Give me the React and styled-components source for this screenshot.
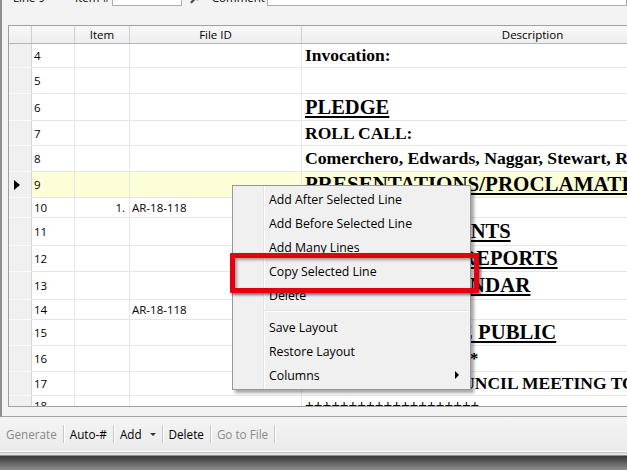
import React from 'react';
import styled, { createGlobalStyle } from 'styled-components';

const ui = `"Segoe UI", "Open Sans", "Noto Sans", sans-serif`;
const serif = `"Liberation Serif", "Times New Roman", serif`;

const Global = createGlobalStyle`
  html, body { margin: 0; padding: 0; background: #f0f0f0; }
  body { width: 627px; height: 470px; overflow: hidden; }
  #root { width: 627px; height: 470px; }
`;

const COLS = '23px 43px 55px 172px 462px';

const Screen = styled.div`
  position: relative;
  width: 627px;
  height: 470px;
  overflow: hidden;
  display: flex;
  flex-direction: column;
  background: #f0f0f0;
  font-family: ${ui};
  font-size: 11.5px;
  color: #000;
`;

const Panel = styled.div`
  flex: none;
  height: 417px;
  box-sizing: border-box;
  border-left: 2px solid #8f8f8f;
  border-bottom: 1px solid #a3a3a3;
  background: #f3f3f3;
  overflow: hidden;
  display: flex;
  flex-direction: column;
`;

const TopBar = styled.div`
  flex: none;
  height: 22px;
  margin-top: -14px;
  display: flex;
  align-items: center;
  padding-left: 11px;
  white-space: nowrap;
`;

const Label = styled.span`
  margin-left: ${p => p.$ml || 0}px;
  margin-right: ${p => p.$mr || 0}px;
`;

const Field = styled.div`
  height: 20px;
  box-sizing: border-box;
  border: 1px solid #abadb3;
  background: #fff;
  width: ${p => (p.$w ? `${p.$w}px` : 'auto')};
  flex: ${p => (p.$grow ? 1 : 'none')};
  margin-left: ${p => p.$ml || 0}px;
  margin-top: -2px;
`;

const IconWrap = styled.span`
  display: inline-flex;
  margin-left: ${p => p.$ml || 0}px;
`;

const GridBox = styled.div`
  flex: none;
  width: 756px;
  height: 382px;
  margin: 17px 0 0 6px;
  box-sizing: border-box;
  border: 1px solid #a0a0a0;
  border-right: none;
  background: #fff;
  overflow: hidden;
`;

const HeaderRow = styled.div`
  display: grid;
  grid-template-columns: ${COLS};
  height: 18px;
  box-sizing: border-box;
  border-bottom: 1px solid #b4b4b4;
  background: linear-gradient(#f8f8f8, #eeeeee);
`;

const HeaderCell = styled.div`
  box-sizing: border-box;
  border-right: 1px solid #d0d0d0;
  display: flex;
  align-items: center;
  justify-content: center;
  line-height: 1;
`;

const Row = styled.div`
  display: grid;
  grid-template-columns: ${COLS};
  height: ${p => p.$h}px;
`;

const RowHead = styled.div`
  box-sizing: border-box;
  background: #f0f0f0;
  border-right: 1px solid #d4d4d4;
  border-bottom: 1px solid #fafafa;
  display: flex;
  align-items: center;
  padding-left: 5px;
`;

const Cell = styled.div`
  box-sizing: border-box;
  background: ${p => (p.$sel ? '#fdfdd8' : '#fff')};
  border-right: 1px solid #e6e6e6;
  border-bottom: 1px solid #e6e6e6;
  display: flex;
  align-items: center;
  justify-content: ${p => (p.$right ? 'flex-end' : 'flex-start')};
  padding: ${p => (p.$right ? '0 4px 0 0' : '0 0 0 2px')};
  white-space: nowrap;
  overflow: hidden;
`;

const DescCell = styled(Cell)`
  padding-left: 3px;
  font-family: ${serif};
  font-weight: bold;
  font-size: ${p => p.$size || 17.5}px;
  text-decoration: ${p => (p.$u ? 'underline' : 'none')};
  text-decoration-thickness: 2px;
  text-underline-offset: 2px;
  overflow: visible;
`;

const Pointer = styled.span`
  width: 0;
  height: 0;
  border-left: 6px solid #000;
  border-top: 5px solid transparent;
  border-bottom: 5px solid transparent;
`;

const Footer = styled.div`
  flex: none;
  height: 35px;
  box-sizing: border-box;
  display: flex;
  align-items: center;
  padding-left: 0;
  font-size: 11.7px;
  background: linear-gradient(#f4f4f4, #ebebeb);
  border-bottom: 1px solid #fbfbfb;
`;

const ToolButton = styled.span`
  display: flex;
  align-items: center;
  height: 18px;
  padding: 0 6px;
  border-right: 1px solid #c8c8c8;
  box-shadow: 1px 0 0 #fff;
  color: ${p => (p.$disabled ? '#8a8a8a' : '#000')};
  white-space: nowrap;
`;

const Caret = styled.span`
  margin-left: 8px;
  width: 0;
  height: 0;
  border-top: 3px solid #333;
  border-left: 3px solid transparent;
  border-right: 3px solid transparent;
`;

const WindowEdge = styled.div`
  flex: 1;
  border-top: 1px solid #c2c2c2;
  background: linear-gradient(#e2e2e2 0, #e2e2e2 2px, #3a3a3a 3px, #4e4e4e 40%, #8e8e8e);
`;

const Menu = styled.div`
  position: absolute;
  left: 232px;
  top: 185px;
  width: 239px;
  box-sizing: border-box;
  padding: 1px 2px 2px;
  font-size: 12.3px;
  background-color: #f0f0f0;
  background-image: linear-gradient(
    to right,
    transparent 30px,
    #e2e3e3 30px,
    #e2e3e3 31px,
    #ffffff 31px,
    #ffffff 32px,
    transparent 32px
  );
  border: 1px solid #979797;
  box-shadow: 3px 3px 3px rgba(0, 0, 0, 0.35);
`;

const MenuItem = styled.div`
  height: 24px;
  display: flex;
  align-items: center;
  padding-left: 34px;
  padding-right: 9px;
  white-space: nowrap;
`;

const SubArrow = styled.span`
  margin-left: auto;
  width: 0;
  height: 0;
  border-left: 4px solid #000;
  border-top: 4px solid transparent;
  border-bottom: 4px solid transparent;
`;

const MenuSep = styled.div`
  height: 8px;
  display: flex;
  align-items: center;
  margin-left: 29px;
  &::after {
    content: '';
    flex: 1;
    height: 1px;
    border-top: 1px solid #e0e0e0;
    background: #fff;
  }
`;

const Highlight = styled.div`
  position: absolute;
  left: 230px;
  top: 253px;
  width: 249px;
  height: 40px;
  box-sizing: border-box;
  border: 5px solid #e4000f;
  border-radius: 1px;
  box-shadow: 2px 2px 3px rgba(0, 0, 0, 0.55), inset 2px 2px 3px rgba(0, 0, 0, 0.35);
`;

const SearchIcon = () => (
  <svg width="13" height="13" viewBox="0 0 13 13">
    <circle cx="7.5" cy="5" r="3.6" fill="#d8e6f5" stroke="#4a6d99" strokeWidth="1.4" />
    <path d="M5 7.6 L1.5 11.2" stroke="#3d4f68" strokeWidth="2.2" strokeLinecap="round" />
  </svg>
);

const rows = [
  { n: 4, h: 24, d: 'Invocation:' },
  { n: 5, h: 26 },
  { n: 6, h: 27, d: 'PLEDGE', size: 20.5, u: true },
  { n: 7, h: 25, d: 'ROLL CALL:' },
  { n: 8, h: 26, d: 'Comerchero, Edwards, Naggar, Stewart, Rahn', size: 17.7 },
  { n: 9, h: 26, d: 'PRESENTATIONS/PROCLAMATIONS', size: 21, u: true, sel: true },
  { n: 10, h: 20, item: '1.', file: 'AR-18-118' },
  { n: 11, h: 28, d: 'PUBLIC COMMENTS', size: 20.5, u: true },
  { n: 12, h: 26, d: 'CITY COUNCIL REPORTS', size: 20.5, u: true },
  { n: 13, h: 28, d: 'CONSENT CALENDAR', size: 21, u: true },
  { n: 14, h: 20, file: 'AR-18-118' },
  { n: 15, h: 26, d: 'REPORT TO THE PUBLIC', size: 20.7, u: true },
  { n: 16, h: 26, d: '*********************', size: 16.5 },
  { n: 17, h: 24, d: 'ADJOURN THE COUNCIL MEETING TO CLOSED SESSION' },
  { n: 18, h: 17, d: '++++++++++++++++++++', size: 15.3 },
];

const menuTop = ['Add After Selected Line', 'Add Before Selected Line', 'Add Many Lines', 'Copy Selected Line', 'Delete'];
const menuBottom = ['Save Layout', 'Restore Layout'];

export default function App() {
  return (
    <Screen>
      <Global />
      <Panel>
        <TopBar>
          <Label $mr={30}>Line 9</Label>
          <Label>Item #</Label>
          <Field $w={70} $ml={2} />
          <IconWrap $ml={8}>
            <SearchIcon />
          </IconWrap>
          <Label $ml={9}>Comment</Label>
          <Field $grow $ml={2} />
        </TopBar>
        <GridBox>
          <HeaderRow>
            <HeaderCell />
            <HeaderCell />
            <HeaderCell>Item</HeaderCell>
            <HeaderCell>File ID</HeaderCell>
            <HeaderCell>Description</HeaderCell>
          </HeaderRow>
          {rows.map(r => (
            <Row key={r.n} $h={r.h}>
              <RowHead>{r.sel && <Pointer />}</RowHead>
              <Cell $sel={r.sel}>{r.n}</Cell>
              <Cell $sel={r.sel} $right>{r.item}</Cell>
              <Cell $sel={r.sel}>{r.file}</Cell>
              <DescCell $sel={r.sel} $size={r.size} $u={r.u}>{r.d}</DescCell>
            </Row>
          ))}
        </GridBox>
      </Panel>
      <Footer>
        <ToolButton $disabled>Generate</ToolButton>
        <ToolButton>Auto-#</ToolButton>
        <ToolButton>
          Add<Caret />
        </ToolButton>
        <ToolButton>Delete</ToolButton>
        <ToolButton $disabled>Go to File</ToolButton>
      </Footer>
      <WindowEdge />
      <Menu>
        {menuTop.map(t => (
          <MenuItem key={t}>{t}</MenuItem>
        ))}
        <MenuSep />
        {menuBottom.map(t => (
          <MenuItem key={t}>{t}</MenuItem>
        ))}
        <MenuItem>
          Columns<SubArrow />
        </MenuItem>
      </Menu>
      <Highlight />
    </Screen>
  );
}
